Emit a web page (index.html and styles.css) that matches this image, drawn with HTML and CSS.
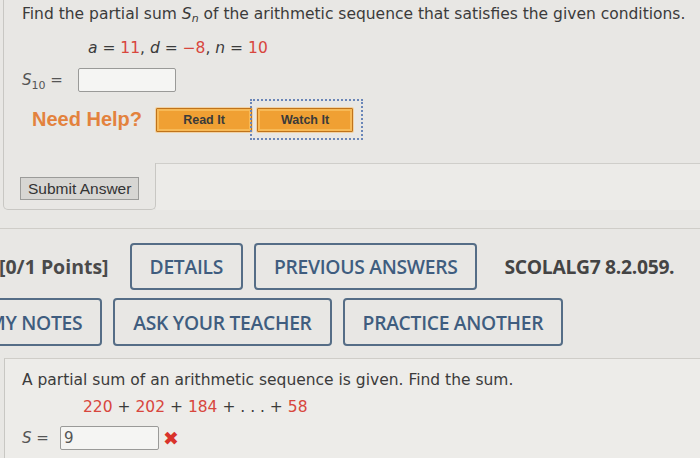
FILE: index.html
```html
<!DOCTYPE html>
<html>
<head>
<meta charset="utf-8">
<link rel="stylesheet" href="styles.css">
</head>
<body>
<div class="page">
  <section class="q1">
    <div class="q1-body">
      <p class="line prompt">Find the partial sum <i>S<sub>n</sub></i> of the arithmetic sequence that satisfies the given conditions.</p>
      <p class="line given"><i>a</i> = <span class="red">11</span>, <i>d</i> = <span class="red">−8</span>, <i>n</i> = <span class="red">10</span></p>
      <div class="line answer"><span class="lbl"><i>S</i><sub>10</sub> =</span><span class="input"></span></div>
      <div class="help">
        <span class="need">Need Help?</span>
        <span class="obtn">Read It</span>
        <span class="focus"><span class="obtn">Watch It</span></span>
      </div>
    </div>
    <div class="q1-foot">
      <div class="submit-box"><span class="submit">Submit Answer</span></div>
      <div class="filler"></div>
    </div>
  </section>
  <div class="sep"></div>
  <section class="head">
    <div class="row row1">
      <span class="points">[0/1 Points]</span>
      <span class="btn">DETAILS</span>
      <span class="btn">PREVIOUS ANSWERS</span>
      <span class="code">SCOLALG7 8.2.059.</span>
    </div>
    <div class="row row2">
      <span class="btn">MY NOTES</span>
      <span class="btn">ASK YOUR TEACHER</span>
      <span class="btn">PRACTICE ANOTHER</span>
    </div>
  </section>
  <section class="q2">
    <p class="line prompt">A partial sum of an arithmetic sequence is given. Find the sum.</p>
    <p class="line expr"><span class="red">220</span> + <span class="red">202</span> + <span class="red">184</span> + . . . + <span class="red">58</span></p>
    <div class="line answer2"><span class="lbl"><i>S</i> =</span><span class="input small">9</span><span class="xmark">✖</span></div>
  </section>
</div>
</body>
</html>
```
FILE: styles.css
```css
html, body {
  margin: 0;
  padding: 0;
}
body {
  width: 700px;
  height: 458px;
  overflow: hidden;
  background: #e8e7e4;
  font-family: "DejaVu Sans", Verdana, sans-serif;
  color: #3b3b3b;
}
.page {
  width: 700px;
}
.q1 {
  padding-left: 3px;
}
.q1-body {
  border-left: 1px solid #c8c7c3;
  padding: 4px 0 0 18px;
  height: 159px;
  box-sizing: content-box;
}
.line {
  margin: 0;
  font-size: 15.5px;
  line-height: 20px;
}
.prompt sub {
  font-size: 11px;
  vertical-align: -3px;
  line-height: 0;
}
.red {
  color: #d8463d;
}
.given {
  margin-top: 14px;
  padding-left: 66px;
}
.answer {
  margin-top: 10px;
  display: flex;
  align-items: center;
  gap: 4px;
}
.lbl {
  color: #555;
  font-size: 15px;
}
.lbl sub {
  font-size: 11px;
  vertical-align: -4px;
  line-height: 0;
}
.input {
  display: inline-block;
  width: 96px;
  height: 22px;
  border: 1px solid #9a9a98;
  border-radius: 2px;
  background: #f5f5f3;
  box-sizing: content-box;
}
.answer .input {
  margin-left: 11px;
}
.help {
  margin-top: 7px;
  display: flex;
  align-items: center;
  padding-left: 10px;
}
.need {
  font-family: "Liberation Sans", Arial, sans-serif;
  font-weight: bold;
  font-size: 20px;
  color: #e3823d;
  margin-right: 14px;
}
.obtn {
  display: inline-block;
  width: 94px;
  height: 22px;
  line-height: 22px;
  text-align: center;
  font-family: "Liberation Sans", Arial, sans-serif;
  font-weight: bold;
  font-size: 12.5px;
  color: #3a3a3a;
  background: #f0a033;
  border: 1px solid #bf731c;
  box-shadow: inset 0 0 0 2px #f7b956, 0 0 0 1px #f1d2a3;
  border-radius: 1px;
}
.focus {
  display: inline-block;
  margin-left: -2px;
  padding: 7px 8px 6px 5px;
  border: 2px dotted #6a86b8;
}
.q1-foot {
  display: flex;
  height: 47px;
}
.submit-box {
  width: 135px;
  border: 1px solid #c8c7c3;
  border-top: none;
  border-radius: 0 0 5px 5px;
  padding: 14px 0 0 16px;
  height: 32px;
  box-sizing: content-box;
}
.submit {
  display: inline-block;
  font-family: "Liberation Sans", Arial, sans-serif;
  font-size: 15.5px;
  color: #333;
  background: #d7d6d3;
  border: 1px solid #9b9b99;
  padding: 2px 7px 2px 7px;
  line-height: 17px;
}
.filler {
  flex: 1;
  border-top: 1px solid #cfceca;
  background: #ecebe8;
  height: 46px;
}
.sep {
  height: 1px;
  background: #cfcdc8;
  margin-top: 18px;
}
.head {
  padding-top: 14px;
  height: 115px;
  font-family: "Open Sans", sans-serif;
}
.row {
  display: flex;
  align-items: center;
  height: 47px;
}
.row1 {
  margin-left: -1px;
}
.row2 {
  margin-top: 8px;
  height: 48px;
  margin-left: -32px;
  gap: 11px;
}
.points {
  font-weight: 700;
  font-size: 19.5px;
  color: #4a4a4a;
  margin-right: 21px;
}
.btn {
  display: inline-flex;
  align-items: center;
  height: 43px;
  padding: 0 18px;
  border: 2px solid #556d86;
  border-radius: 4px;
  font-weight: 600;
  font-size: 19.3px;
  color: #3f5d7f;
  letter-spacing: -0.3px;
}
.row2 .btn {
  height: 44px;
}
.row1 .btn + .btn {
  margin-left: 11px;
}
.code {
  margin-left: 27px;
  font-weight: 700;
  font-size: 19.3px;
  color: #444;
  letter-spacing: -0.3px;
}
.q2 {
  margin-left: 4px;
  border-left: 1px solid #c8c7c3;
  border-top: 1px solid #cfcdc8;
  background: #edece9;
  padding: 11px 0 0 17px;
  height: 100px;
}
.expr {
  margin-top: 7px;
  padding-left: 61px;
}
.answer2 {
  margin-top: 9px;
  display: flex;
  align-items: center;
}
.answer2 .input {
  margin-left: 11px;
  height: 24px;
  line-height: 23px;
  font-size: 15px;
  padding-left: 3px;
  box-sizing: border-box;
  width: 99px;
  color: #555;
}
.xmark {
  color: #d9332b;
  font-size: 19px;
  margin-left: 4px;
  font-weight: bold;
}
```
